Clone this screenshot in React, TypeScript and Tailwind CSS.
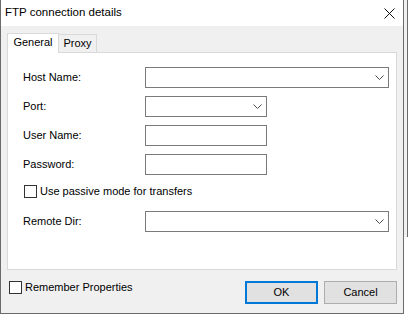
import React from 'react';

const font = { fontFamily: '"Liberation Sans", Arial, sans-serif' };

function Chevron() {
  return (
    <svg width="9" height="5" viewBox="0 0 9 5" className="shrink-0">
      <path d="M0.5 0.5 L4.5 4.5 L8.5 0.5" fill="none" stroke="#4a4a4a" strokeWidth="1" />
    </svg>
  );
}

function Combo({ width }: { width: string }) {
  return (
    <div className={`${width} h-[21px] bg-white border border-[#7a7a7a] flex items-center justify-end pr-[4px]`}>
      <Chevron />
    </div>
  );
}

function TextBox() {
  return <div className="w-[122px] h-[21px] bg-white border border-[#7a7a7a]" />;
}

function Row({ label, children }: { label: string; children: React.ReactNode }) {
  return (
    <div className="flex items-center h-[21px]">
      <div className="w-[122px] text-[11px] text-black leading-none pb-[1px]">{label}</div>
      {children}
    </div>
  );
}

function Check({ label }: { label: string }) {
  return (
    <div className="flex items-center h-[13px] gap-[3px]">
      <div className="w-[13px] h-[13px] border border-[#333333] bg-white shrink-0" />
      <span className="text-[11px] text-black leading-none">{label}</span>
    </div>
  );
}

export default function App() {
  return (
    <div className="w-[409px] h-[314px] bg-white flex overflow-hidden" style={font}>
      <div className="w-[404px] h-[314px] flex flex-col border-l border-r border-b border-[#6b6b6b] shrink-0">
        <div className="h-[26px] bg-white flex items-center justify-between pl-[4px] pr-[8px]">
          <span className="text-[11.5px] text-black">FTP connection details</span>
          <svg width="11" height="11" viewBox="0 0 11 11">
            <path d="M0.5 0.5 L10.5 10.5 M10.5 0.5 L0.5 10.5" stroke="#111" strokeWidth="1" />
          </svg>
        </div>
        <div className="flex-1 bg-[#f0f0f0] flex flex-col pt-[6px] px-[6px]">
          <div className="flex items-end h-[20px]">
            <div className="w-[52px] h-[20px] bg-white border border-b-0 border-[#d9d9d9] flex items-center justify-center text-[11px] text-black relative z-10 -mb-px pb-[2px]">
              General
            </div>
            <div className="w-[38px] h-[18px] bg-[#f0f0f0] border border-l-0 border-b-0 border-[#d9d9d9] flex items-center justify-center text-[11px] text-black">
              Proxy
            </div>
          </div>
          <div className="h-[218px] bg-white border border-[#d9d9d9] flex flex-col pl-[15px] pt-[14px]">
            <div className="flex flex-col gap-[8px]">
              <Row label="Host Name:">
                <Combo width="w-[244px]" />
              </Row>
              <Row label="Port:">
                <Combo width="w-[122px]" />
              </Row>
              <Row label="User Name:">
                <TextBox />
              </Row>
              <Row label="Password:">
                <TextBox />
              </Row>
            </div>
            <div className="mt-[10px] pl-[1px]">
              <Check label="Use passive mode for transfers" />
            </div>
            <div className="mt-[13px]">
              <Row label="Remote Dir:">
                <Combo width="w-[244px]" />
              </Row>
            </div>
          </div>
          <div className="flex items-start justify-between mt-[11px]">
            <div className="pl-[2px]">
              <Check label="Remember Properties" />
            </div>
            <div className="flex gap-[6px]">
              <div className="w-[73px] h-[23px] bg-[#e1e1e1] border-2 border-[#0078d7] flex items-center justify-center text-[11px] text-black">
                OK
              </div>
              <div className="w-[73px] h-[23px] bg-[#e1e1e1] border border-[#adadad] flex items-center justify-center text-[11px] text-black">
                Cancel
              </div>
            </div>
          </div>
        </div>
      </div>
      <div className="w-[5px] h-[237px] flex">
        <div className="w-[3px] bg-[#f0f0f0]" />
        <div className="w-px bg-[#6b6b6b]" />
      </div>
    </div>
  );
}
